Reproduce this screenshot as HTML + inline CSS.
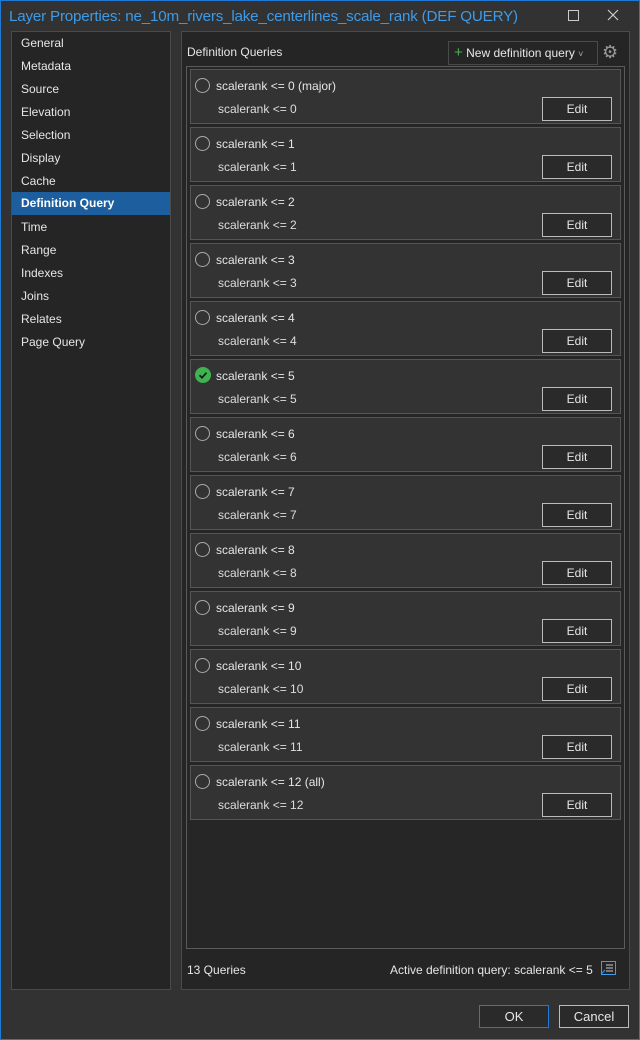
<!DOCTYPE html>
<html><head><style>
*{box-sizing:border-box;margin:0;padding:0}
html,body{width:640px;height:1040px}
body{background:#323232;font-family:"Liberation Sans",sans-serif;font-size:12px;color:#e6e6e6;position:relative;overflow:hidden}
.frame{position:absolute;left:0;top:0;width:640px;height:1040px;border:1px solid #1e7ad6}
.abs{position:absolute}
.title{left:9px;top:8px;font-size:15.2px;color:#3d9be9;letter-spacing:-0.2px}
.left{left:11px;top:31px;width:160px;height:959px;background:#252525;border:1px solid #4a4a4a}
.nav{position:absolute;left:0;width:158px;height:22px;line-height:22px;padding-left:9px}
.nav.sel{background:#1d5f9e;font-weight:bold;color:#fff}
.right{left:181px;top:31px;width:449px;height:959px;background:#252525;border:1px solid #4a4a4a}
.list{left:186px;top:66px;width:439px;height:883px;border:1px solid #5a5a5a;background:#262626}
.item{position:absolute;left:190px;width:431px;height:55px;background:#333;border:1px solid #555}
.rad{position:absolute;left:4px;top:8px;width:15px;height:15px;border:1px solid #aaa;border-radius:50%}
.t1{position:absolute;left:25px;top:9px}
.t2{position:absolute;left:27px;top:32px;color:#ddd}
.edit{position:absolute;left:351px;top:27px;width:70px;height:24px;border:1px solid #bbb;text-align:center;line-height:22px;background:#2a2a2a}
.btn{position:absolute;top:1005px;width:70px;height:23px;text-align:center;line-height:21px;font-size:13px;background:#2a2a2a}
</style></head><body>
<div class="frame"></div>
<div class="abs title">Layer Properties: ne_10m_rivers_lake_centerlines_scale_rank (DEF QUERY)</div>
<div class="abs" style="left:568px;top:10px;width:11px;height:11px;border:1px solid #ccc"></div>
<svg class="abs" style="left:607px;top:9px" width="12" height="12"><path d="M1 1l10 10M11 1L1 11" stroke="#ccc" stroke-width="1.2"/></svg>
<div class="abs left">
<div class="nav" style="top:0">General</div>
<div class="nav" style="top:23px">Metadata</div>
<div class="nav" style="top:46px">Source</div>
<div class="nav" style="top:69px">Elevation</div>
<div class="nav" style="top:92px">Selection</div>
<div class="nav" style="top:115px">Display</div>
<div class="nav" style="top:138px">Cache</div>
<div class="nav sel" style="top:160px;height:23px;line-height:23px">Definition Query</div>
<div class="nav" style="top:184px">Time</div>
<div class="nav" style="top:207px">Range</div>
<div class="nav" style="top:230px">Indexes</div>
<div class="nav" style="top:253px">Joins</div>
<div class="nav" style="top:276px">Relates</div>
<div class="nav" style="top:299px">Page Query</div>
</div>
<div class="abs right"></div>
<div class="abs" style="left:187px;top:45px">Definition Queries</div>
<div class="abs" style="left:448px;top:41px;width:150px;height:24px;border:1px solid #4a4a4a;line-height:22px;padding-left:5px;white-space:nowrap"><span style="color:#4caf50;font-size:15px">+</span> New definition query <span style="font-size:9px;color:#aaa">˅</span></div>
<div class="abs" style="left:602px;top:42px;font-size:18px;color:#999">⚙</div>
<div class="abs list"></div>

<div class="item" style="top:69px"><div class="rad"></div><div class="t1">scalerank &lt;= 0 (major)</div><div class="t2">scalerank &lt;= 0</div><div class="edit">Edit</div></div>
<div class="item" style="top:127px"><div class="rad"></div><div class="t1">scalerank &lt;= 1</div><div class="t2">scalerank &lt;= 1</div><div class="edit">Edit</div></div>
<div class="item" style="top:185px"><div class="rad"></div><div class="t1">scalerank &lt;= 2</div><div class="t2">scalerank &lt;= 2</div><div class="edit">Edit</div></div>
<div class="item" style="top:243px"><div class="rad"></div><div class="t1">scalerank &lt;= 3</div><div class="t2">scalerank &lt;= 3</div><div class="edit">Edit</div></div>
<div class="item" style="top:301px"><div class="rad"></div><div class="t1">scalerank &lt;= 4</div><div class="t2">scalerank &lt;= 4</div><div class="edit">Edit</div></div>
<div class="item" style="top:359px"><svg style="position:absolute;left:4px;top:7px" width="16" height="16"><circle cx="8" cy="8" r="8" fill="#3fb350"/><path d="M4.5 8.2l2.5 2.5 4.5-5" stroke="#1a1a1a" stroke-width="1.8" fill="none"/></svg><div class="t1">scalerank &lt;= 5</div><div class="t2">scalerank &lt;= 5</div><div class="edit">Edit</div></div>
<div class="item" style="top:417px"><div class="rad"></div><div class="t1">scalerank &lt;= 6</div><div class="t2">scalerank &lt;= 6</div><div class="edit">Edit</div></div>
<div class="item" style="top:475px"><div class="rad"></div><div class="t1">scalerank &lt;= 7</div><div class="t2">scalerank &lt;= 7</div><div class="edit">Edit</div></div>
<div class="item" style="top:533px"><div class="rad"></div><div class="t1">scalerank &lt;= 8</div><div class="t2">scalerank &lt;= 8</div><div class="edit">Edit</div></div>
<div class="item" style="top:591px"><div class="rad"></div><div class="t1">scalerank &lt;= 9</div><div class="t2">scalerank &lt;= 9</div><div class="edit">Edit</div></div>
<div class="item" style="top:649px"><div class="rad"></div><div class="t1">scalerank &lt;= 10</div><div class="t2">scalerank &lt;= 10</div><div class="edit">Edit</div></div>
<div class="item" style="top:707px"><div class="rad"></div><div class="t1">scalerank &lt;= 11</div><div class="t2">scalerank &lt;= 11</div><div class="edit">Edit</div></div>
<div class="item" style="top:765px"><div class="rad"></div><div class="t1">scalerank &lt;= 12 (all)</div><div class="t2">scalerank &lt;= 12</div><div class="edit">Edit</div></div>

<div class="abs" style="left:187px;top:963px">13 Queries</div>
<div class="abs" style="left:390px;top:963px">Active definition query: scalerank &lt;= 5</div>
<svg class="abs" style="left:600px;top:961px" width="16" height="14"><rect x="1.5" y="0.5" width="14" height="13" fill="none" stroke="#3d9be9"/><path d="M6 4h7M6 7h7M6 10h7" stroke="#ccc"/><path d="M1 13l4-4" stroke="#3d9be9"/></svg>
<div class="btn" style="left:479px;border:1px solid #1e7ad6">OK</div>
<div class="btn" style="left:559px;border:1px solid #bbb">Cancel</div>
</body></html>
